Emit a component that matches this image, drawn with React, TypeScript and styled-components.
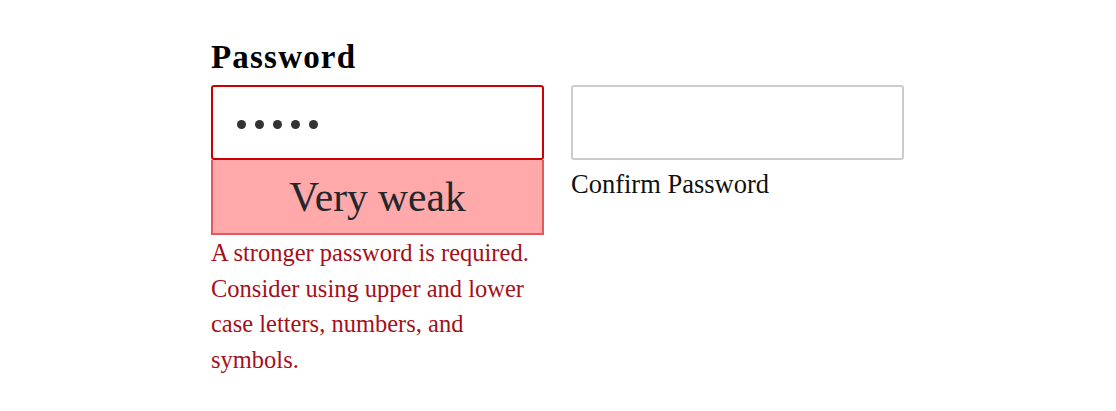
import React from 'react';
import styled, {createGlobalStyle} from 'styled-components';

const GlobalStyle = createGlobalStyle`
  body {
    margin: 0;
    background: #ffffff;
    font-family: "Liberation Serif", "DejaVu Serif", serif;
    color: #111111;
  }
`;

const Page = styled.div`
  padding: 38px 0 0 211px;
`;

const Label = styled.div`
  font-weight: bold;
  font-size: 33px;
  letter-spacing: 1.2px;
  line-height: 38px;
  margin-bottom: 9px;
  color: #000;
`;

const Row = styled.div`
  display: flex;
  gap: 27px;
  align-items: flex-start;
`;

const Column = styled.div`
  width: 333px;
  display: flex;
  flex-direction: column;
`;

const Field = styled.div<{ $invalid?: boolean }>`
  box-sizing: border-box;
  height: 75px;
  border: 2px solid ${p => (p.$invalid ? '#cc0000' : '#cccccc')};
  border-radius: 3px;
  background: #fff;
  display: flex;
  align-items: center;
  padding: 4px 0 0 24px;
  gap: 9px;
`;

const Dot = styled.span`
  width: 9px;
  height: 9px;
  border-radius: 50%;
  background: #333333;
`;

const Strength = styled.div`
  box-sizing: border-box;
  height: 75px;
  background: #ffa9ab;
  border: 2px solid #e35a5e;
  border-top: none;
  display: flex;
  align-items: center;
  justify-content: center;
  font-size: 41.5px;
  color: #23272b;
`;

const ErrorText = styled.p`
  margin: 0;
  font-size: 24.5px;
  line-height: 35.5px;
  color: #a50f1a;
  width: 332px;
`;

const SubLabel = styled.div`
  font-size: 26.5px;
  line-height: 30px;
  margin-top: 9px;
  color: #111;
`;

export default function App() {
  return (
    <>
      <GlobalStyle/>
      <Page>
        <Label>Password</Label>
        <Row>
          <Column>
            <Field $invalid>
              {[0, 1, 2, 3, 4].map(i => <Dot key={i}/>)}
            </Field>
            <Strength>Very weak</Strength>
            <ErrorText>
              A stronger password is required. Consider using upper and lower case letters, numbers, and symbols.
            </ErrorText>
          </Column>
          <Column>
            <Field/>
            <SubLabel>Confirm Password</SubLabel>
          </Column>
        </Row>
      </Page>
    </>
  );
}
